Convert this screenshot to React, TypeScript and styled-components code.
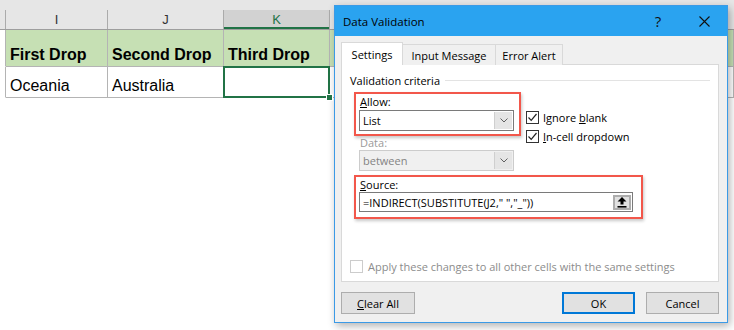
import React from 'react'
import styled, { createGlobalStyle, css } from 'styled-components'

const GlobalStyle = createGlobalStyle`
  html, body {
    margin: 0;
    padding: 0;
    background: #ffffff;
  }
`

const Page = styled.div`
  position: relative;
  width: 734px;
  height: 330px;
  overflow: hidden;
  background: #ffffff;
`

/* ---------- spreadsheet ---------- */

const Sheet = styled.div`
  font-family: 'Liberation Sans', Arial, sans-serif;
  color: #000;
`

const TopStrip = styled.div`
  height: 10px;
  background: #e6e6e6;
`

const gridCols = css`
  display: grid;
  grid-template-columns: 6px 102px 116px 106px 1fr;
`

const HeaderRow = styled.div`
  ${gridCols};
  height: 19px;
  background: #e6e6e6;
  border-bottom: 1px solid #9e9e9e;
`

const ColHead = styled.div<{ $active?: boolean }>`
  display: flex;
  align-items: center;
  justify-content: center;
  border-right: 1px solid #ababab;
  font-size: 13px;
  color: #333;
  ${p => p.$active && css`
    background: #d2d2d2;
    color: #217346;
    box-shadow: inset 0 -2px 0 #217346;
  `}
`

const Row = styled.div<{ $h: number }>`
  ${gridCols};
  height: ${p => p.$h}px;
`

const Cell = styled.div<{ $head?: boolean; $selected?: boolean; $blank?: boolean }>`
  position: relative;
  display: flex;
  align-items: flex-end;
  padding: 0 0 2px 4px;
  border-right: 1px solid #b4b4b4;
  border-bottom: 1px solid #b4b4b4;
  font-size: 16px;
  line-height: 18px;
  background: ${p => (p.$head ? '#c6e0b4' : '#ffffff')};
  font-weight: ${p => (p.$head ? 700 : 400)};
  ${p => p.$blank && css`
    border-bottom-color: transparent;
    padding: 0;
  `}
  ${p => p.$selected && css`
    &::after {
      content: '';
      position: absolute;
      left: -1px;
      top: -1px;
      right: -1px;
      bottom: -1px;
      border: 2px solid #217346;
    }
    &::before {
      content: '';
      position: absolute;
      right: -4px;
      bottom: -4px;
      width: 5px;
      height: 5px;
      background: #217346;
      border: 1px solid #fff;
      z-index: 1;
    }
  `}
`

/* ---------- dialog ---------- */

const Dialog = styled.div`
  position: absolute;
  left: 334px;
  top: 5px;
  width: 394px;
  height: 318px;
  box-sizing: border-box;
  border: 1px solid #3b9ae6;
  background: #f0f0f0;
  box-shadow: 2px 3px 8px rgba(0, 0, 0, 0.3);
  display: flex;
  flex-direction: column;
  font-family: 'Open Sans', 'Noto Sans', sans-serif;
  font-size: 11px;
  color: #000;
`

const TitleBar = styled.div`
  height: 30px;
  flex: none;
  display: flex;
  align-items: center;
  background: #2aa3f0;
  padding-left: 8px;
`

const Title = styled.div`
  flex: 1;
  font-size: 11.5px;
`

const TitleButton = styled.div`
  width: 46px;
  height: 30px;
  display: flex;
  align-items: center;
  justify-content: center;
  font-size: 15px;
  color: #111;
`

const Body = styled.div`
  flex: 1;
  display: flex;
  flex-direction: column;
  padding: 7px 8px 7px 6px;
`

const TabStrip = styled.div`
  display: flex;
  align-items: flex-end;
  height: 22px;
  margin-bottom: -1px;
  position: relative;
  z-index: 1;
`

const Tab = styled.div<{ $active?: boolean; $w: number }>`
  width: ${p => p.$w}px;
  box-sizing: border-box;
  height: ${p => (p.$active ? 23 : 21)}px;
  display: flex;
  align-items: center;
  justify-content: center;
  border: 1px solid #d9d9d9;
  border-bottom: none;
  margin-left: -1px;
  background: ${p => (p.$active ? '#ffffff' : '#f0f0f0')};
  &:first-child {
    margin-left: 0;
  }
`

const Panel = styled.div`
  height: 218px;
  box-sizing: border-box;
  background: #ffffff;
  border: 1px solid #d9d9d9;
  display: flex;
  flex-direction: column;
`

const GroupHead = styled.div`
  display: flex;
  align-items: center;
  gap: 5px;
  height: 16px;
  margin: 7px 8px 0 8px;
  &::after {
    content: '';
    flex: 1;
    height: 1px;
    background: #e3e3e3;
  }
`

const Criteria = styled.div`
  margin: 4px 0 0 12px;
  display: flex;
  flex-direction: column;
`

const CriteriaRow = styled.div`
  display: flex;
  align-items: flex-start;
  gap: 5px;
  height: 44px;
`

const Highlight = styled.div<{ $w: number }>`
  width: ${p => p.$w}px;
  box-sizing: border-box;
  border: 2px solid #f2574b;
  box-shadow: 1px 2px 3px rgba(0, 0, 0, 0.22);
  padding: 0 4px 3px 3px;
`

const Label = styled.div<{ $h?: number; $disabled?: boolean }>`
  height: ${p => p.$h ?? 16}px;
  line-height: ${p => p.$h ?? 16}px;
  padding-left: 1px;
  color: ${p => (p.$disabled ? '#9a9a9a' : '#000')};
`

const SelectBox = styled.div<{ $disabled?: boolean }>`
  width: 155px;
  height: 21px;
  box-sizing: border-box;
  display: flex;
  border: 1px solid ${p => (p.$disabled ? '#cccccc' : '#7a7a7a')};
  background: ${p => (p.$disabled ? '#f0f0f0' : '#ffffff')};
  color: ${p => (p.$disabled ? '#838383' : '#000')};
`

const SelectValue = styled.div`
  flex: 1;
  display: flex;
  align-items: center;
  padding-left: 3px;
`

const DropButton = styled.div`
  width: 17px;
  margin: 1px;
  display: flex;
  align-items: center;
  justify-content: center;
  background: #e5e5e5;
  border-left: 1px solid #cfcfcf;
`

const Checks = styled.div`
  margin-top: 16px;
  display: flex;
  flex-direction: column;
`

const CheckRow = styled.div<{ $disabled?: boolean }>`
  height: 19px;
  display: flex;
  align-items: center;
  gap: 4px;
  color: ${p => (p.$disabled ? '#8c8c8c' : '#000')};
`

const Box = styled.div<{ $disabled?: boolean }>`
  width: 13px;
  height: 13px;
  box-sizing: border-box;
  border: 1px solid ${p => (p.$disabled ? '#cccccc' : '#333333')};
  background: #fff;
  display: flex;
  align-items: center;
  justify-content: center;
`

const DataBlock = styled.div`
  padding-left: 5px;
`

const SourceBox = styled(Highlight)`
  margin-top: 4px;
  padding: 0 8px 5px 3px;
`

const Input = styled.div`
  height: 20px;
  box-sizing: border-box;
  border: 1px solid #7a7a7a;
  background: #fff;
  display: flex;
  align-items: center;
  padding: 0 1px 0 3px;
`

const InputText = styled.div`
  flex: 1;
`

const CollapseButton = styled.div`
  width: 18px;
  height: 15px;
  box-sizing: border-box;
  border: 2px solid #adadad;
  background: #e1e1e1;
  display: flex;
  align-items: center;
  justify-content: center;
`

const ApplyRow = styled(CheckRow)`
  margin: auto 0 7px 8px;
  height: 16px;
  gap: 5px;
`

const Buttons = styled.div`
  margin-top: 10px;
  display: flex;
  justify-content: space-between;
`

const ButtonGroup = styled.div`
  display: flex;
  gap: 11px;
`

const Button = styled.div<{ $w: number; $default?: boolean }>`
  width: ${p => p.$w}px;
  height: 22px;
  box-sizing: border-box;
  display: flex;
  align-items: center;
  justify-content: center;
  background: #e1e1e1;
  border: 1px solid #adadad;
  ${p => p.$default && css`
    border: 2px solid #0078d7;
  `}
`

const Chevron = ({ color = '#606060' }: { color?: string }) => (
  <svg width="8" height="5" viewBox="0 0 8 5">
    <path d="M0.5 0.5 L4 4 L7.5 0.5" fill="none" stroke={color} strokeWidth="1" />
  </svg>
)

const Tick = () => (
  <svg width="11" height="11" viewBox="0 0 11 11">
    <path d="M1.5 5.5 L4.2 8.3 L9.5 2" fill="none" stroke="#222" strokeWidth="1.2" />
  </svg>
)

const CloseIcon = () => (
  <svg width="11" height="11" viewBox="0 0 11 11">
    <path d="M0.5 0.5 L10.5 10.5 M10.5 0.5 L0.5 10.5" stroke="#111" strokeWidth="1.1" />
  </svg>
)

const UpIcon = () => (
  <svg width="10" height="11" viewBox="0 0 10 11">
    <path d="M5 0 L9.5 4.5 H6.5 V7.5 H3.5 V4.5 H0.5 Z" fill="#000" />
    <rect x="0.5" y="9" width="9" height="1.6" fill="#000" />
  </svg>
)

const Check = ({ checked, disabled, children }: { checked?: boolean; disabled?: boolean; children: React.ReactNode }) => (
  <CheckRow $disabled={disabled}>
    <Box $disabled={disabled}>{checked && <Tick />}</Box>
    <span>{children}</span>
  </CheckRow>
)

export default function App() {
  return (
    <Page>
      <GlobalStyle />
      <Sheet>
        <TopStrip />
        <HeaderRow>
          <ColHead />
          <ColHead>I</ColHead>
          <ColHead>J</ColHead>
          <ColHead $active>K</ColHead>
          <div />
        </HeaderRow>
        <Row $h={37}>
          <Cell $blank />
          <Cell $head>First Drop</Cell>
          <Cell $head>Second Drop</Cell>
          <Cell $head>Third Drop</Cell>
          <Cell $head />
        </Row>
        <Row $h={31}>
          <Cell $blank />
          <Cell>Oceania</Cell>
          <Cell>Australia</Cell>
          <Cell $selected />
          <Cell />
        </Row>
      </Sheet>

      <Dialog>
        <TitleBar>
          <Title>Data Validation</Title>
          <TitleButton>?</TitleButton>
          <TitleButton>
            <CloseIcon />
          </TitleButton>
        </TitleBar>
        <Body>
          <TabStrip>
            <Tab $active $w={62}>Settings</Tab>
            <Tab $w={94}>Input Message</Tab>
            <Tab $w={68}>Error Alert</Tab>
          </TabStrip>
          <Panel>
            <GroupHead>Validation criteria</GroupHead>
            <Criteria>
              <CriteriaRow>
                <Highlight $w={167}>
                  <Label>
                    <u>A</u>llow:
                  </Label>
                  <SelectBox>
                    <SelectValue>List</SelectValue>
                    <DropButton>
                      <Chevron />
                    </DropButton>
                  </SelectBox>
                </Highlight>
                <Checks>
                  <Check checked>
                    Ignore <u>b</u>lank
                  </Check>
                  <Check checked>
                    <u>I</u>n-cell dropdown
                  </Check>
                </Checks>
              </CriteriaRow>
              <DataBlock>
                <Label $h={14} $disabled>
                  Data:
                </Label>
                <SelectBox $disabled>
                  <SelectValue>between</SelectValue>
                  <DropButton>
                    <Chevron />
                  </DropButton>
                </SelectBox>
              </DataBlock>
              <SourceBox $w={289}>
                <Label $h={15}>
                  <u>S</u>ource:
                </Label>
                <Input>
                  <InputText>=INDIRECT(SUBSTITUTE(J2," ","_"))</InputText>
                  <CollapseButton>
                    <UpIcon />
                  </CollapseButton>
                </Input>
              </SourceBox>
            </Criteria>
            <ApplyRow $disabled>
              <Box $disabled />
              <span>Apply these changes to all other cells with the same settings</span>
            </ApplyRow>
          </Panel>
          <Buttons>
            <Button $w={74}>
              <span>
                <u>C</u>lear All
              </span>
            </Button>
            <ButtonGroup>
              <Button $w={73} $default>
                OK
              </Button>
              <Button $w={73}>Cancel</Button>
            </ButtonGroup>
          </Buttons>
        </Body>
      </Dialog>
    </Page>
  )
}
